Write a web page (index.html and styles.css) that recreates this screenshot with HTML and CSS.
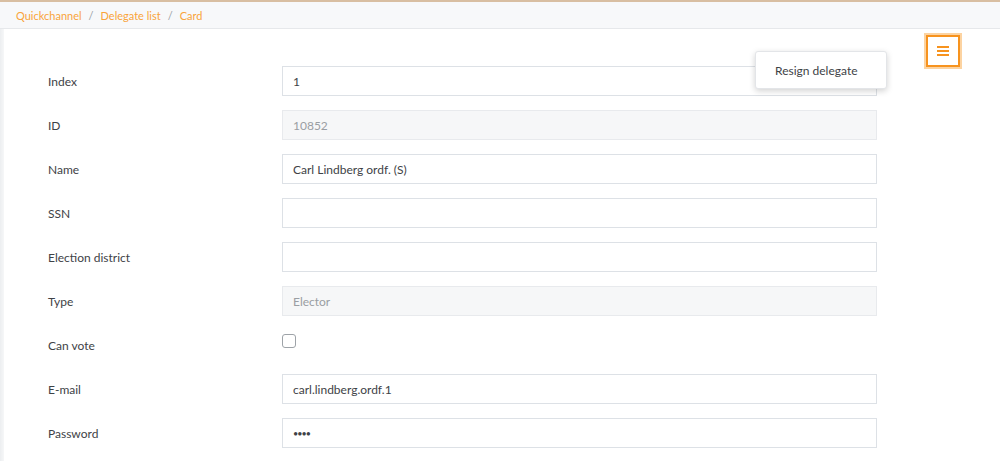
FILE: index.html
```html
<!DOCTYPE html>
<html lang="en">
<head>
    <meta charset="UTF-8">
    <meta name="viewport" content="width=device-width, initial-scale=1.0">
    <title>Delegate card</title>
    <link rel="stylesheet" href="styles.css">
</head>
<body>
    <div class="app">
        <div class="sidebar-edge"></div>
        <div class="main">
            <ol class="breadcrumb">
                <li><a href="#">Quickchannel</a></li>
                <li><a href="#">Delegate list</a></li>
                <li><a href="#">Card</a></li>
            </ol>

            <div class="content">
                <form class="card-form">
                    <div class="form-row">
                        <label class="form-label">Index</label>
                        <input class="form-input" type="text" value="1">
                    </div>
                    <div class="form-row">
                        <label class="form-label">ID</label>
                        <input class="form-input" type="text" value="10852" disabled>
                    </div>
                    <div class="form-row">
                        <label class="form-label">Name</label>
                        <input class="form-input" type="text" value="Carl Lindberg ordf. (S)">
                    </div>
                    <div class="form-row">
                        <label class="form-label">SSN</label>
                        <input class="form-input" type="text" value="">
                    </div>
                    <div class="form-row">
                        <label class="form-label">Election district</label>
                        <input class="form-input" type="text" value="">
                    </div>
                    <div class="form-row">
                        <label class="form-label">Type</label>
                        <input class="form-input" type="text" value="Elector" disabled>
                    </div>
                    <div class="form-row">
                        <label class="form-label">Can vote</label>
                        <div class="check-cell"><span class="checkbox"></span></div>
                    </div>
                    <div class="form-row">
                        <label class="form-label">E-mail</label>
                        <input class="form-input" type="text" value="carl.lindberg.ordf.1">
                    </div>
                    <div class="form-row">
                        <label class="form-label">Password</label>
                        <input class="form-input" type="password" value="1234">
                    </div>
                </form>

                <button class="menu-btn" type="button">
                    <svg width="12" height="10" viewBox="0 0 12 10">
                        <rect x="0" y="0" width="12" height="2" fill="#f7931e"/>
                        <rect x="0" y="4" width="12" height="2" fill="#f7931e"/>
                        <rect x="0" y="8" width="12" height="2" fill="#f7931e"/>
                    </svg>
                </button>
                <div class="dropdown">
                    <a href="#">Resign delegate</a>
                </div>
            </div>
        </div>
    </div>
</body>
</html>
```

FILE: styles.css
```css
html, body {
    margin: 0;
    padding: 0;
}
body {
    font-family: "Lato", "Liberation Sans", sans-serif;
    font-size: 12px;
    color: #3e4246;
    background-color: #fff;
    border-top: 2px solid #d8bea2;
}
.app {
    display: flex;
    min-height: 459px;
}
.sidebar-edge {
    width: 4px;
    background: linear-gradient(to right, #eceef0, #f6f7f8);
    flex-shrink: 0;
}
.main {
    flex: 1;
    margin-left: -4px;
}
.breadcrumb {
    list-style: none;
    margin: 0;
    padding: 0 16px;
    height: 26px;
    display: flex;
    align-items: center;
    background-color: #f7f8fa;
    border-bottom: 1px solid #e6e8eb;
    font-size: 11px;
}
.breadcrumb li + li::before {
    content: "/";
    color: #9aa0a6;
    padding: 0 7px;
}
.breadcrumb a {
    color: #f9a43a;
    text-decoration: none;
}
.content {
    position: relative;
    padding: 37px 0 0 4px;
}
.card-form {
    width: 873px;
}
.form-row {
    display: flex;
    align-items: center;
    height: 30px;
    margin-bottom: 14px;
}
.form-label {
    width: 234px;
    padding-left: 44px;
}
.form-input {
    flex: 1;
    height: 30px;
    box-sizing: border-box;
    border: 1px solid #dde1e6;
    border-radius: 0;
    padding: 0 10px;
    font-family: inherit;
    font-size: 12px;
    color: #3e4246;
    background: #fff;
    outline: none;
}
.form-input:disabled {
    background-color: #f6f7f8;
    border-color: #e8eaed;
    color: #9a9ea3;
}
.form-input[type="password"] {
    font-size: 9px;
    letter-spacing: -1px;
}
.check-cell {
    flex: 1;
    align-self: flex-start;
    padding-top: 4px;
}
.checkbox {
    display: block;
    width: 12px;
    height: 12px;
    border: 1px solid #9ea3a8;
    border-radius: 3px;
}
.menu-btn {
    position: absolute;
    top: 6px;
    left: 926px;
    width: 34px;
    height: 32px;
    padding: 0;
    display: flex;
    align-items: center;
    justify-content: center;
    background: #fff;
    border: 2px solid #f7931e;
    box-shadow: 0 0 0 2px #fcd3a1;
    cursor: pointer;
}
.dropdown {
    position: absolute;
    top: 22px;
    left: 755px;
    width: 132px;
    height: 38px;
    box-sizing: border-box;
    display: flex;
    align-items: center;
    padding-left: 19px;
    background: #fff;
    border: 1px solid #e3e5e8;
    border-radius: 3px;
    box-shadow: 0 2px 6px rgba(0, 0, 0, 0.18);
}
.dropdown a {
    color: #3e4246;
    text-decoration: none;
}
```
